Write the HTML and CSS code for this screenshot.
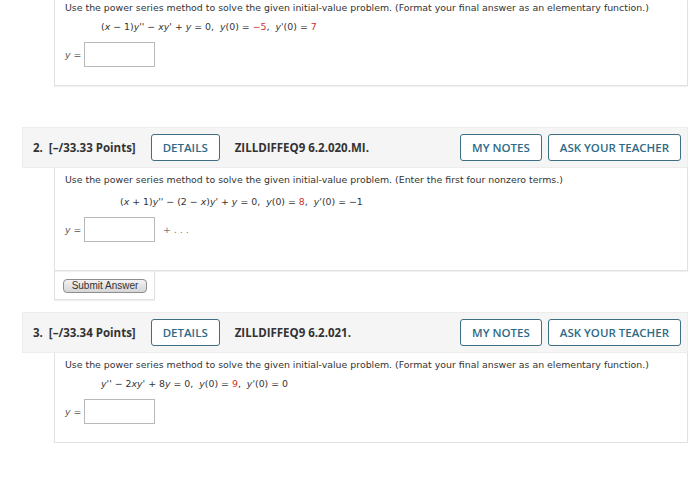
FILE: index.html
```html
<!DOCTYPE html>
<html>
<head>
<meta charset="utf-8">
<link rel="stylesheet" href="styles.css">
</head>
<body>
<div class="page">
  <section class="question q1">
    <div class="qbody first">
      <p class="prompt">Use the power series method to solve the given initial-value problem. (Format your final answer as an elementary function.)</p>
      <p class="eq">(<i>x</i> − 1)<i>y</i>'' − <i>xy</i>' + <i>y</i> = 0, &nbsp;<i>y</i>(0) = <span class="red">−5</span>, &nbsp;<i>y</i>'(0) = <span class="red">7</span></p>
      <div class="answer"><span class="lbl"><i>y</i> =</span><span class="box"></span></div>
    </div>
  </section>

  <section class="question q2">
    <header class="qhead">
      <span class="num">2.</span>
      <span class="pts">[–/33.33 Points]</span>
      <span class="btn details">DETAILS</span>
      <span class="code">ZILLDIFFEQ9 6.2.020.MI.</span>
      <span class="spacer"></span>
      <span class="btn">MY NOTES</span>
      <span class="btn">ASK YOUR TEACHER</span>
    </header>
    <div class="qbody">
      <p class="prompt">Use the power series method to solve the given initial-value problem. (Enter the first four nonzero terms.)</p>
      <p class="eq wide">(<i>x</i> + 1)<i>y</i>'' − (2 − <i>x</i>)<i>y</i>' + <i>y</i> = 0, &nbsp;<i>y</i>(0) = <span class="red">8</span>, &nbsp;<i>y</i>'(0) = −1</p>
      <div class="answer"><span class="lbl"><i>y</i> =</span><span class="box"></span><span class="more">+ . . .</span></div>
    </div>
    <div class="submit"><button class="submit-btn" type="button">Submit Answer</button></div>
  </section>

  <section class="question q3">
    <header class="qhead">
      <span class="num">3.</span>
      <span class="pts">[–/33.34 Points]</span>
      <span class="btn details">DETAILS</span>
      <span class="code">ZILLDIFFEQ9 6.2.021.</span>
      <span class="spacer"></span>
      <span class="btn">MY NOTES</span>
      <span class="btn">ASK YOUR TEACHER</span>
    </header>
    <div class="qbody">
      <p class="prompt">Use the power series method to solve the given initial-value problem. (Format your final answer as an elementary function.)</p>
      <p class="eq"><i>y</i>'' − 2<i>xy</i>' + 8<i>y</i> = 0, &nbsp;<i>y</i>(0) = <span class="red">9</span>, &nbsp;<i>y</i>'(0) = 0</p>
      <div class="answer"><span class="lbl"><i>y</i> =</span><span class="box"></span></div>
    </div>
  </section>
</div>
</body>
</html>
```

FILE: styles.css
```css
html, body {
  margin: 0;
  padding: 0;
  background: #fff;
}
.page {
  padding: 0 12px 0 22px;
  font-family: "DejaVu Sans", Verdana, sans-serif;
  color: #333;
}
.question {
  display: flex;
  flex-direction: column;
}
.q2 { margin-top: 41px; }
.q3 { margin-top: 12px; }

.qhead {
  display: flex;
  align-items: center;
  height: 41px;
  box-sizing: border-box;
  background: #f5f5f5;
  border: 1px solid #ececec;
  padding: 0 6px 0 10px;
  font-family: "Open Sans", sans-serif;
  font-weight: 700;
  font-size: 11.5px;
  color: #333;
}
.num { margin-right: 6px; }
.pts { margin-right: 15px; }
.code { margin-left: 15px; }
.spacer { flex: 1; }
.btn {
  display: inline-flex;
  align-items: center;
  height: 27px;
  box-sizing: border-box;
  padding: 0 11px;
  border: 1.5px solid #3e6f84;
  border-radius: 3px;
  background: #fff;
  color: #2e6a86;
  font-weight: 600;
  font-size: 11.5px;
  margin-left: 6px;
}
.btn.details { margin-left: 0; }

.qbody {
  margin-left: 32px;
  border: 1px solid #e2e2e2;
  border-top: none;
  box-shadow: 0 1px 1px rgba(0,0,0,0.06);
  padding: 6px 10px 0 10px;
  font-size: 9.4px;
  display: flex;
  flex-direction: column;
  box-sizing: border-box;
}
.q1 .qbody { padding-top: 2px; height: 86px; }
.q2 .qbody { height: 103px; }
.q3 .qbody { height: 90px; }

.prompt {
  margin: 0;
  line-height: 12px;
}
.eq {
  margin: 7px 0 0 36px;
  line-height: 12px;
}
.eq.wide { margin-left: 55px; margin-top: 10px; }
.red { color: #d0302b; }
.answer {
  display: flex;
  align-items: center;
  margin-top: 9px;
}
.q2 .answer { margin-top: 9px; }
.lbl { width: 19px; color: #555; }
.box {
  width: 71px;
  height: 25px;
  box-sizing: border-box;
  border: 1px solid #b8b8b8;
  background: #fff;
}
.more {
  margin-left: 8px;
  color: #777;
}
.submit {
  align-self: flex-start;
  margin-left: 32px;
  width: 101px;
  height: 29px;
  box-sizing: border-box;
  border: 1px solid #e2e2e2;
  border-top: none;
  box-shadow: 0 1px 1px rgba(0,0,0,0.06);
  display: flex;
  align-items: center;
  padding-left: 8px;
  padding-top: 1px;
}
.submit-btn {
  width: 84px;
  height: 14px;
  padding: 0;
  border: 1px solid #8e8e8e;
  border-radius: 4px;
  background: linear-gradient(#f2f2f2, #d6d6d6);
  font-family: "Liberation Sans", Arial, sans-serif;
  font-size: 10px;
  line-height: 12px;
  color: #333;
}
```
